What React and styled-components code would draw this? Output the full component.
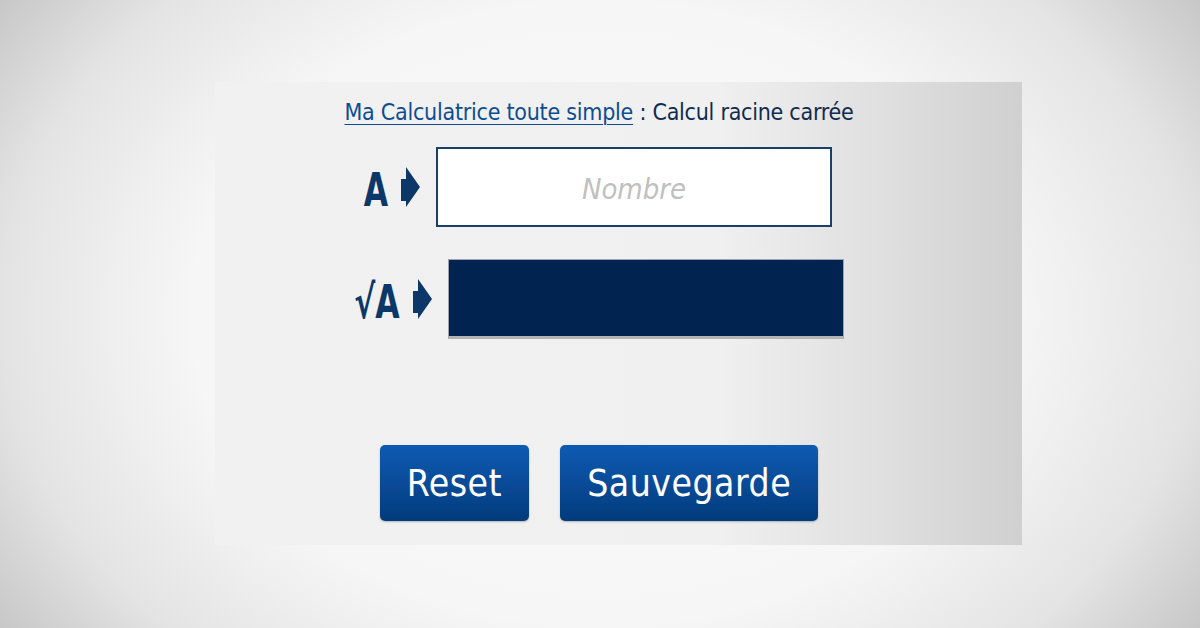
import React from 'react';
import { styled, createGlobalStyle } from 'styled-components';

const GlobalStyle = createGlobalStyle`
    html, body {
        margin: 0;
        padding: 0;
    }
    body {
        font-family: 'DejaVu Sans Condensed', 'DejaVu Sans', sans-serif;
    }
`;

const Page = styled.div`
    width: 1200px;
    height: 628px;
    padding: 82px 0 0 215px;
    box-sizing: border-box;
    overflow: hidden;
    background: radial-gradient(ellipse 62% 90% at 50% 50%, #fbfbfb 0%, #f6f6f6 55%, #e4e4e4 80%, #c4c4c4 100%);
`;

const Panel = styled.div`
    width: 807px;
    height: 463px;
    padding: 0 39px 0 0;
    box-sizing: border-box;
    display: flex;
    flex-direction: column;
    align-items: center;
    background: linear-gradient(90deg, #f1f1f1 0%, #f0f0f0 62%, #e0e0e0 82%, #d0d0d0 100%);
`;

const Title = styled.h1`
    margin: 16px 0 0;
    font-family: 'DejaVu Sans Condensed', 'DejaVu Sans', sans-serif;
    font-size: 23px;
    font-weight: normal;
    line-height: 28px;
    letter-spacing: -0.25px;
    color: #0f2b4f;
`;

const TitleLink = styled.a`
    color: #0e4c92;
    text-decoration: underline;
    text-underline-offset: 4px;
    text-decoration-thickness: 1px;
`;

const Row = styled.div`
    margin-top: ${(props) => props.$top}px;
    display: flex;
    align-items: center;
`;

const LabelBox = styled.div`
    margin-right: 13px;
    padding-top: 5px;
    width: ${(props) => props.$width}px;
    display: flex;
    justify-content: flex-end;
`;

const Label = styled.span`
    display: inline-block;
    transform: scaleX(0.76);
    transform-origin: right center;
    font-family: 'DejaVu Sans Condensed', 'DejaVu Sans', sans-serif;
    font-size: 46px;
    font-weight: bold;
    line-height: 46px;
    white-space: nowrap;
    color: #0b3868;
`;

const Arrow = styled.svg`
    margin-right: 16px;
    width: 19px;
    height: 40px;
    fill: #0b3868;
`;

const NumberInput = styled.input`
    width: 396px;
    height: 80px;
    box-sizing: border-box;
    padding-top: 4px;
    border: 2px solid #1a3f6a;
    background-color: #fff;
    font-family: 'DejaVu Sans Condensed', 'DejaVu Sans', sans-serif;
    font-size: 29px;
    font-style: italic;
    text-align: center;
    color: #0b3868;
    outline: none;

    &::placeholder {
        color: #c0c0c0;
    }
`;

const ResultBox = styled.div`
    width: 396px;
    height: 80px;
    box-sizing: border-box;
    border: 1px solid #9aa3ad;
    border-bottom: 3px solid #b4b4b4;
    background-color: #00244f;
`;

const ButtonRow = styled.div`
    margin-top: 106px;
    display: flex;
    gap: 31px;
`;

const Button = styled.button`
    height: 76px;
    padding: 0 27px;
    border: none;
    border-radius: 5px;
    background: linear-gradient(180deg, #0d5bb3 0%, #0a4b98 50%, #003b7b 100%);
    box-shadow: 0 1px 2px rgba(0, 0, 0, 0.25);
    font-family: 'DejaVu Sans Condensed', 'DejaVu Sans', sans-serif;
    font-size: 37px;
    letter-spacing: 0.5px;
    color: #fff;
    cursor: pointer;
`;

const ArrowIcon = () => (
    <Arrow viewBox="0 0 19 40">
        <polygon points="0,12 5,12 5,0 19,20 5,40 5,34 0,34" />
    </Arrow>
);

const App = () => {
    return (
        <Page>
            <GlobalStyle />
            <Panel>
                <Title>
                    <TitleLink href="#">Ma Calculatrice toute simple</TitleLink> : Calcul racine carrée
                </Title>
                <Row $top={21}>
                    <LabelBox $width={22}>
                        <Label>A</Label>
                    </LabelBox>
                    <ArrowIcon />
                    <NumberInput placeholder="Nombre" />
                </Row>
                <Row $top={32}>
                    <LabelBox $width={46}>
                        <Label>√A</Label>
                    </LabelBox>
                    <ArrowIcon />
                    <ResultBox />
                </Row>
                <ButtonRow>
                    <Button>Reset</Button>
                    <Button>Sauvegarde</Button>
                </ButtonRow>
            </Panel>
        </Page>
    );
};

export default App;
